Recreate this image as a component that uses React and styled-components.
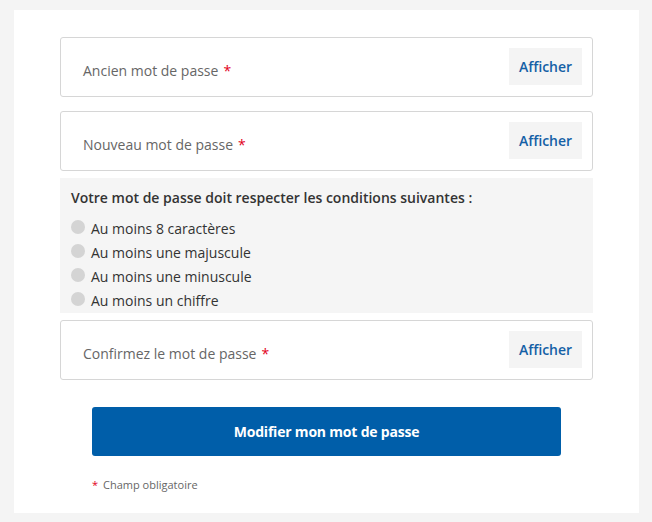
import React from 'react';
import styled, { createGlobalStyle } from 'styled-components';

const GlobalStyle = createGlobalStyle`
  html, body {
    margin: 0;
    padding: 0;
    background: #f4f4f4;
    font-family: 'Open Sans', 'Noto Sans', sans-serif;
  }
  * {
    box-sizing: border-box;
  }
`;

const Page = styled.div`
  padding: 10px 13px 9px 14px;
`;

const Panel = styled.div`
  background: #fff;
  height: 503px;
  padding: 27px 46px 0 46px;
  display: flex;
  flex-direction: column;
`;

const Field = styled.div`
  height: 60px;
  border: 1px solid #d6d6d6;
  border-radius: 3px;
  display: flex;
  align-items: center;
  justify-content: space-between;
  padding: 0 10px 0 22px;
  margin-bottom: ${({ $gap }) => $gap}px;
`;

const Label = styled.span`
  font-size: 14px;
  color: #666;
  margin-top: 7px;
`;

const Star = styled.span`
  color: #e2001a;
  margin-left: 5px;
`;

const ShowButton = styled.button`
  width: 73px;
  height: 37px;
  margin-top: -1px;
  border: none;
  border-radius: 0;
  background: #f4f4f4;
  color: #1560a6;
  font-family: inherit;
  font-size: 14px;
  font-weight: 600;
  padding: 0;
  cursor: pointer;
`;

const Rules = styled.div`
  background: #f5f5f5;
  height: 135px;
  padding: 9px 11px 0 11px;
  margin-bottom: 7px;
`;

const RulesTitle = styled.div`
  font-size: 14px;
  font-weight: 600;
  color: #333;
  line-height: 22px;
  margin-bottom: 8px;
`;

const RuleList = styled.ul`
  list-style: none;
  margin: 0;
  padding: 0;
`;

const Rule = styled.li`
  display: flex;
  align-items: center;
  gap: 6px;
  font-size: 14px;
  color: #333;
  line-height: 24px;
`;

const Dot = styled.span`
  width: 14px;
  height: 14px;
  border-radius: 50%;
  background: #d4d4d4;
  margin-top: -4px;
  flex-shrink: 0;
`;

const Submit = styled.button`
  align-self: center;
  width: 469px;
  height: 49px;
  margin-top: 27px;
  border: none;
  border-radius: 3px;
  background: #005ea9;
  color: #fff;
  font-family: inherit;
  font-size: 14px;
  font-weight: 700;
  letter-spacing: -0.2px;
  cursor: pointer;
`;

const Note = styled.div`
  margin: 21px 0 0 32px;
  font-size: 11px;
  color: #666;
  line-height: 16px;

  span {
    color: #e2001a;
    margin-right: 5px;
  }
`;

const PasswordField = ({ label, gap }) => (
  <Field $gap={gap}>
    <Label>
      {label}
      <Star>*</Star>
    </Label>
    <ShowButton type="button">Afficher</ShowButton>
  </Field>
);

const rules = [
  'Au moins 8 caractères',
  'Au moins une majuscule',
  'Au moins une minuscule',
  'Au moins un chiffre',
];

const App = () => (
  <Page>
    <GlobalStyle />
    <Panel>
      <PasswordField label="Ancien mot de passe" gap={14} />
      <PasswordField label="Nouveau mot de passe" gap={7} />
      <Rules>
        <RulesTitle>Votre mot de passe doit respecter les conditions suivantes :</RulesTitle>
        <RuleList>
          {rules.map((r) => (
            <Rule key={r}>
              <Dot />
              {r}
            </Rule>
          ))}
        </RuleList>
      </Rules>
      <PasswordField label="Confirmez le mot de passe" gap={0} />
      <Submit type="button">Modifier mon mot de passe</Submit>
      <Note>
        <span>*</span>Champ obligatoire
      </Note>
    </Panel>
  </Page>
);

export default App;
